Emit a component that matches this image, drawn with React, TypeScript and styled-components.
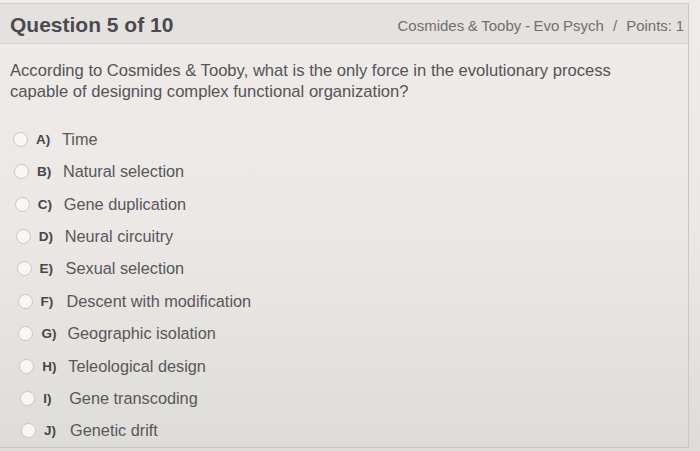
import styled, { createGlobalStyle } from "styled-components"

const GlobalStyle = createGlobalStyle`
    html, body {
        margin: 0;
        padding: 0;
        background: #f4f2f0;
    }
    body {
        font-family: "Liberation Sans", Arial, sans-serif;
    }
`

const Page = styled.div`
    width: 700px;
    height: 451px;
    overflow: hidden;
    box-sizing: border-box;
    padding-top: 3px;
    background: linear-gradient(180deg, #efebe8 0%, #ebe8e5 50%, #dedcd8 100%);
`

const Card = styled.div`
    width: 689px;
    height: 445px;
    box-sizing: border-box;
    border-top: 1px solid #d2cfcc;
    border-right: 1px solid #c9c8c4;
    border-bottom: 1px solid #c8c6c2;
    display: flex;
    flex-direction: column;
`

const Header = styled.div`
    height: 40px;
    display: flex;
    align-items: center;
    justify-content: space-between;
    padding: 0 4px 0 10px;
    background: #e4e1df;
    border-bottom: 1px solid #d3d0cd;
`

const Title = styled.h1`
    margin: 0;
    font-size: 21px;
    font-weight: bold;
    color: #4b4a50;
    padding-top: 2px;
`

const Meta = styled.span`
    font-size: 15px;
    color: #707070;
    padding-top: 3px;
    word-spacing: -0.5px;
`

const Slash = styled.span`
    margin: 0 9px;
`

const Body = styled.div`
    padding: 16px 10px 0 10px;
`

const QuestionText = styled.p`
    margin: 0 0 21px 0;
    font-size: 16.6px;
    line-height: 21px;
    color: #555456;
`

const Options = styled.ul`
    list-style: none;
    margin: 0;
    padding: 0;
`

const Option = styled.li<{ $shift: number }>`
    height: 32.4px;
    display: flex;
    align-items: center;
    margin-left: ${(p) => 3 + p.$shift}px;
`

const Radio = styled.span`
    width: 15px;
    height: 15px;
    border-radius: 50%;
    border: 1px solid #c9c7c5;
    background: #f8f7f6;
    box-sizing: border-box;
    flex-shrink: 0;
`

const Letter = styled.span`
    width: 26px;
    margin-left: 8px;
    font-size: 13.5px;
    font-weight: bold;
    color: #47464a;
`

const Answer = styled.span`
    font-size: 16.3px;
    color: #58575a;
`

const choices = [
    ["A)", "Time"],
    ["B)", "Natural selection"],
    ["C)", "Gene duplication"],
    ["D)", "Neural circuitry"],
    ["E)", "Sexual selection"],
    ["F)", "Descent with modification"],
    ["G)", "Geographic isolation"],
    ["H)", "Teleological design"],
    ["I)", "Gene transcoding"],
    ["J)", "Genetic drift"],
]

export default function App() {
    return (
        <>
            <GlobalStyle />
            <Page>
                <Card>
                    <Header>
                        <Title>Question 5 of 10</Title>
                        <Meta>
                            Cosmides &amp; Tooby - Evo Psych<Slash>/</Slash>Points: 1
                        </Meta>
                    </Header>
                    <Body>
                        <QuestionText>
                            According to Cosmides &amp; Tooby, what is the only force in the evolutionary process
                            <br />
                            capable of designing complex functional organization?
                        </QuestionText>
                        <Options>
                            {choices.map(([letter, text], i) => (
                                <Option key={letter} $shift={i * 0.9}>
                                    <Radio />
                                    <Letter>{letter}</Letter>
                                    <Answer>{text}</Answer>
                                </Option>
                            ))}
                        </Options>
                    </Body>
                </Card>
            </Page>
        </>
    )
}
